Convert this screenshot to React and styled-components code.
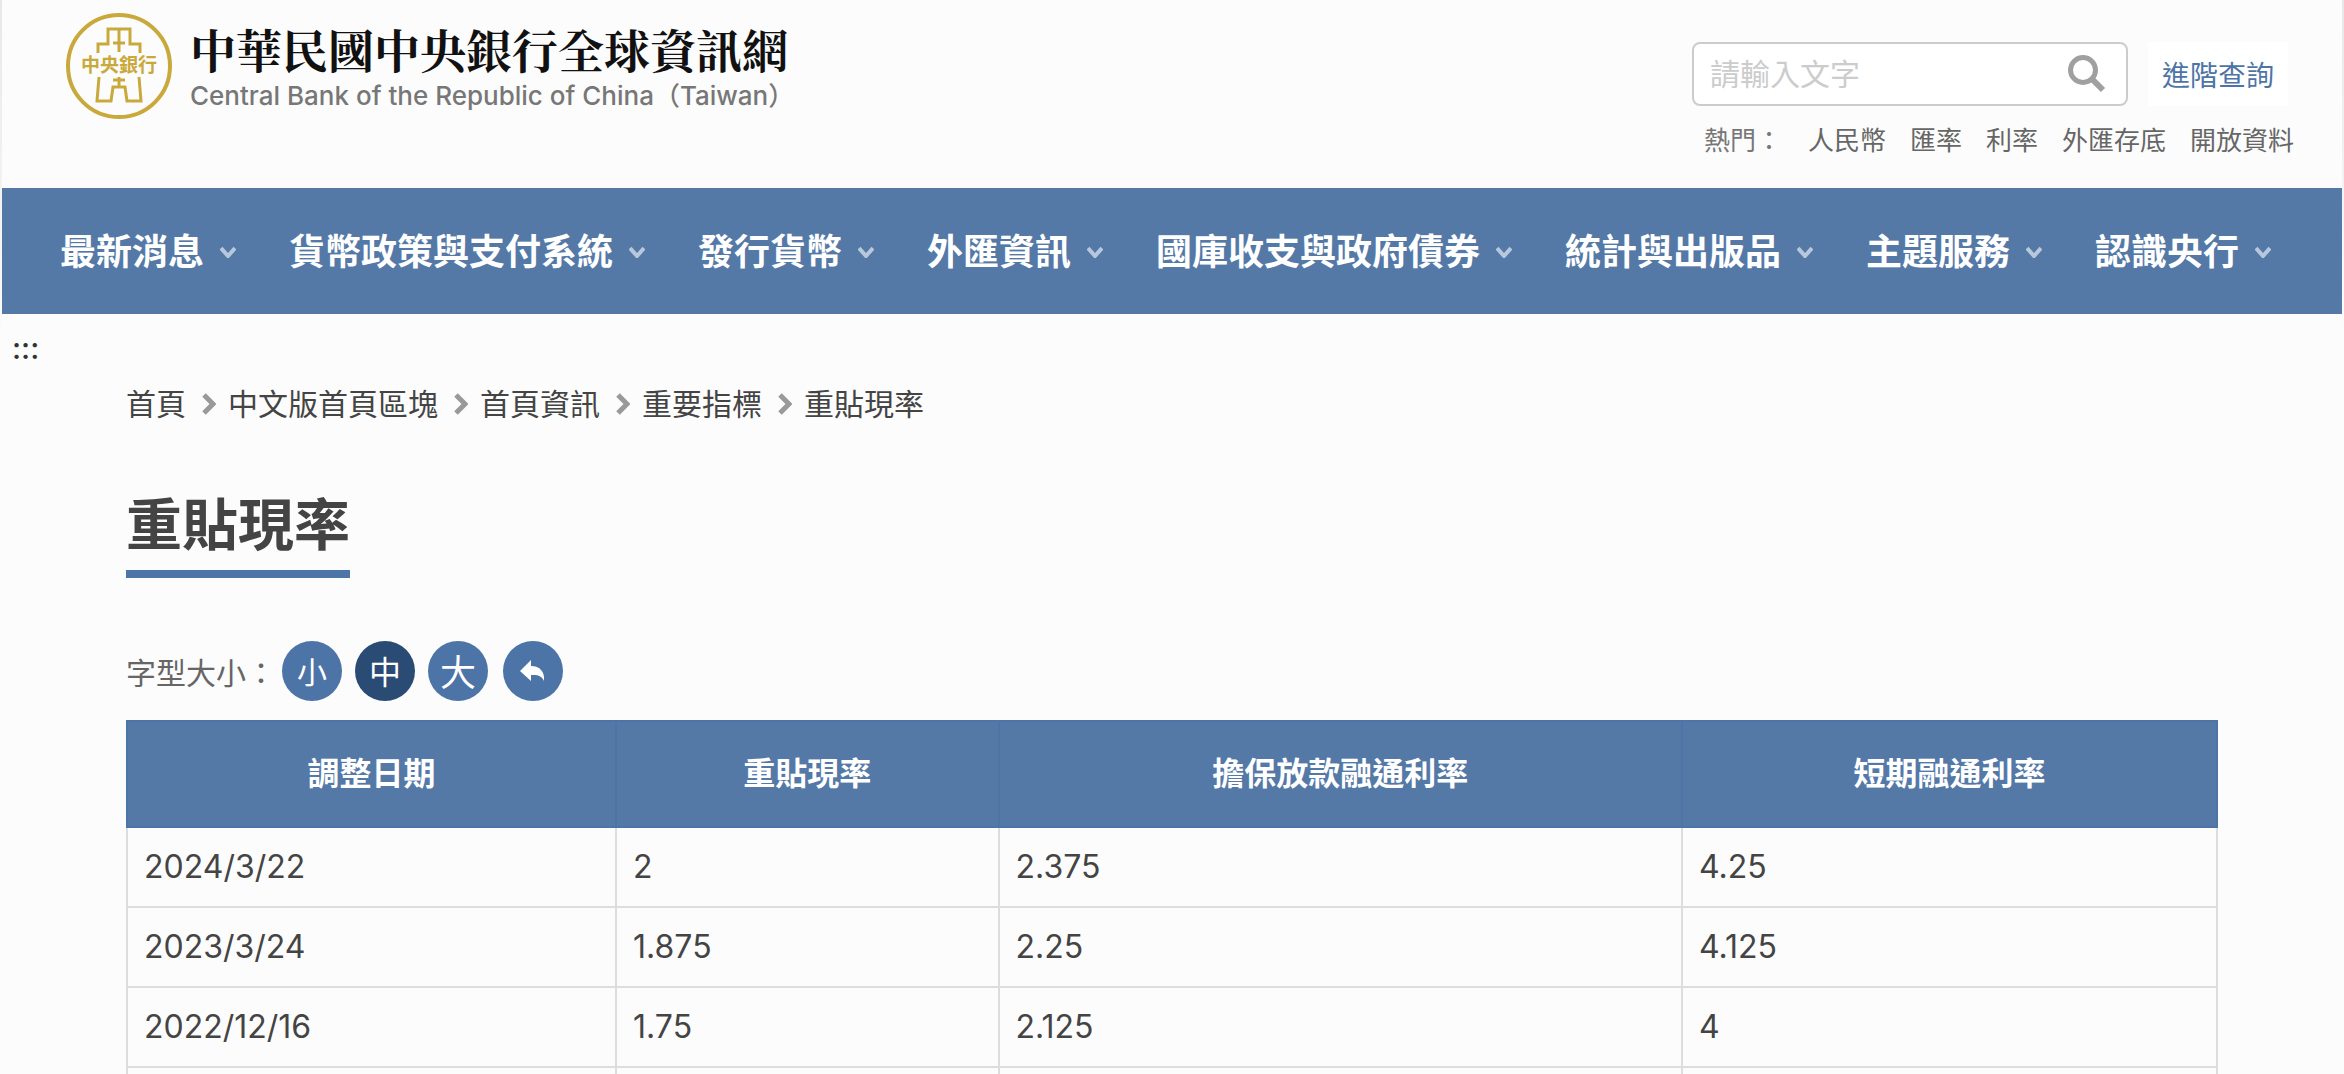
import React from 'react'
import styled, { createGlobalStyle } from 'styled-components'

const GlobalStyle = createGlobalStyle`
  *, *::before, *::after {
    box-sizing: border-box;
  }
  body {
    margin: 0;
    background: #fcfcfc linear-gradient(#e8e8e8, #f2f2f2 180px, #fcfcfc 340px) no-repeat;
    color: #444;
    font-family: Inter, "Noto Sans CJK TC", sans-serif;
  }
  a {
    color: inherit;
    text-decoration: none;
  }
`

const Page = styled.div`
  margin: 0 2px;
  background: #fcfcfc;
`

const Header = styled.header`
  display: flex;
  justify-content: space-between;
  align-items: flex-start;
  height: 188px;
  padding: 13px 48px 0 64px;
`

const Brand = styled.a`
  display: flex;
  gap: 18px;
`

const Emblem = styled.svg`
  width: 106px;
  height: 106px;
  flex: none;
`

const BrandText = styled.span`
  display: flex;
  flex-direction: column;
  padding-top: 2px;
`

const BrandName = styled.span`
  color: #111;
  font: 700 46px/66px "Noto Serif CJK TC", "Noto Sans CJK TC", serif;
`

const BrandSub = styled.span`
  color: #777;
  font: 500 26px/30px Inter, "Noto Sans CJK TC", sans-serif;
  white-space: nowrap;
`

const Tools = styled.div`
  display: flex;
  flex-direction: column;
  gap: 16px;
  padding-top: 29px;
`

const SearchForm = styled.form`
  display: flex;
  gap: 20px;
`

const SearchBox = styled.div`
  display: flex;
  align-items: center;
  width: 436px;
  height: 64px;
  padding: 0 20px 0 16px;
  background: #fff;
  border: 2px solid #ccc;
  border-radius: 8px;
`

const SearchInput = styled.input`
  flex: 1;
  min-width: 0;
  padding: 0;
  border: 0;
  outline: 0;
  background: transparent;
  color: #444;
  font: 400 30px/44px Inter, "Noto Sans CJK TC", sans-serif;
  &::placeholder {
    color: #ccc;
    opacity: 1;
  }
`

const SearchButton = styled.button`
  display: flex;
  padding: 0;
  border: 0;
  background: transparent;
  cursor: pointer;
`

const Advanced = styled.a`
  display: flex;
  align-items: center;
  padding: 0 14px;
  background: #fff;
  color: #4d74a6;
  font-size: 28px;
`

const HotWords = styled.div`
  display: flex;
  gap: 24px;
  padding-left: 12px;
  color: #666;
  font-size: 26px;
  line-height: 38px;
`

const HotLabel = styled.span`
  width: 80px;
  color: #777;
`

const Nav = styled.nav`
  display: flex;
  align-items: center;
  gap: 53px;
  height: 126px;
  padding: 2px 0 0 58px;
  background: #5479a7;
  white-space: nowrap;
`

const NavLink = styled.a`
  display: flex;
  align-items: center;
  gap: 16px;
  color: #fff;
  font-size: 36px;
  font-weight: 700;
  line-height: 52px;
`

const AccessKey = styled.a`
  display: block;
  width: 40px;
  padding: 14px 0 0 10px;
  color: #333;
  font-size: 30px;
  font-weight: 500;
  line-height: 40px;
`

const Main = styled.main`
  padding: 14px 124px 0;
`

const Crumbs = styled.nav`
  display: flex;
  align-items: center;
  font-size: 30px;
  line-height: 44px;
`

const CrumbArrow = styled.svg`
  width: 14px;
  height: 22px;
  margin: 0 12px 0 16px;
`

const Title = styled.h1`
  width: fit-content;
  margin: 58px 0 0;
  padding-bottom: 4px;
  border-bottom: 8px solid #4d74a6;
  font-size: 56px;
  font-weight: 700;
  line-height: 82px;
`

const SizeBar = styled.div`
  display: flex;
  align-items: center;
  gap: 13px;
  margin: 63px 0 19px;
`

const SizeLabel = styled.span`
  margin-right: -7px;
  color: #666;
  font-size: 30px;
`

const RoundButton = styled.button`
  display: flex;
  align-items: center;
  justify-content: center;
  width: 60px;
  height: 60px;
  padding: 0 0 2px;
  border: 0;
  border-radius: 50%;
  background: ${props => (props.$active ? '#2a4b73' : '#4d74a6')};
  color: #fff;
  font: 400 ${props => props.$size || 30}px/58px "Noto Sans CJK TC", sans-serif;
  cursor: pointer;
`

const BackButton = styled(RoundButton)`
  margin-left: 2px;
  padding: 0;
`

const Table = styled.table`
  width: 100%;
  table-layout: fixed;
  border-collapse: collapse;
`

const Th = styled.th`
  width: ${props => props.$width};
  height: 106px;
  padding: 0 0 6px;
  border: 2px solid #4d74a6;
  background: #5479a7;
  color: #fff;
  font-size: 32px;
  font-weight: 700;
`

const Td = styled.td`
  height: 80px;
  padding: 0 16px;
  border: 2px solid #ddd;
  font-size: 32px;
  line-height: 46px;
`

const menu = [
  '最新消息',
  '貨幣政策與支付系統',
  '發行貨幣',
  '外匯資訊',
  '國庫收支與政府債券',
  '統計與出版品',
  '主題服務',
  '認識央行',
]

const hotWords = ['人民幣', '匯率', '利率', '外匯存底', '開放資料']

const crumbs = ['首頁', '中文版首頁區塊', '首頁資訊', '重要指標', '重貼現率']

const columns = [
  { name: '調整日期', width: '23.4%' },
  { name: '重貼現率', width: '18.3%' },
  { name: '擔保放款融通利率', width: '32.7%' },
  { name: '短期融通利率', width: '25.6%' },
]

// the newest row comes first, the last one is still empty
const rates = [
  ['2024/3/22', '2', '2.375', '4.25'],
  ['2023/3/24', '1.875', '2.25', '4.125'],
  ['2022/12/16', '1.75', '2.125', '4'],
  ['', '', '', ''],
]

const Logo = () => (
  <Emblem viewBox="0 0 106 106" fill="none" stroke="#c9a93c">
    <circle cx="53" cy="53" r="51" strokeWidth="4" />
    <g strokeWidth="3">
      <path d="M32 40V31H42V16H64V31H74V40M53 16V39M47 30H59" />
      <path d="M33 64L31 88H45L47 74H59L61 88H75L73 64" />
      <path d="M53 64V74M47 67H59" />
    </g>
    <text
      x="53"
      y="59"
      textAnchor="middle"
      fill="#c9a93c"
      stroke="none"
      fontFamily="Noto Sans CJK TC, sans-serif"
      fontSize="19"
      fontWeight="700"
    >
      中央銀行
    </text>
  </Emblem>
)

const App = () => (
  <Page>
    <GlobalStyle />
    <Header>
      <Brand href="#">
        <Logo />
        <BrandText>
          <BrandName>中華民國中央銀行全球資訊網</BrandName>
          <BrandSub>Central Bank of the Republic of China（Taiwan）</BrandSub>
        </BrandText>
      </Brand>
      <Tools>
        <SearchForm>
          <SearchBox>
            <SearchInput type="text" placeholder="請輸入文字" aria-label="請輸入文字" />
            <SearchButton type="button" aria-label="搜尋">
              <svg width="38" height="38" viewBox="0 0 38 38" fill="none" stroke="#a0a0a0">
                <circle cx="15" cy="15" r="12.5" strokeWidth="5" />
                <path d="M23 23L35 35" strokeWidth="6" />
              </svg>
            </SearchButton>
          </SearchBox>
          <Advanced href="#">進階查詢</Advanced>
        </SearchForm>
        <HotWords>
          <HotLabel>熱門：</HotLabel>
          {hotWords.map(word => <a href="#" key={word}>{word}</a>)}
        </HotWords>
      </Tools>
    </Header>
    <Nav>
      {menu.map(item => (
        <NavLink href="#" key={item}>
          {item}
          <svg width="16" height="12" viewBox="0 0 16 12" fill="none" stroke="#b8c8dc">
            <path d="M1 2L8 10L15 2" strokeWidth="4" />
          </svg>
        </NavLink>
      ))}
    </Nav>
    <AccessKey href="#">:::</AccessKey>
    <Main>
      <Crumbs>
        {crumbs.map((crumb, i) => (
          <React.Fragment key={crumb}>
            {i > 0 && (
              <CrumbArrow viewBox="0 0 14 22" fill="none" stroke="#999">
                <path d="M2 2L11 11L2 20" strokeWidth="5" />
              </CrumbArrow>
            )}
            <a href="#">{crumb}</a>
          </React.Fragment>
        ))}
      </Crumbs>
      <Title>重貼現率</Title>
      <SizeBar>
        <SizeLabel>字型大小：</SizeLabel>
        <RoundButton>小</RoundButton>
        <RoundButton $active $size={32}>中</RoundButton>
        <RoundButton $size={36}>大</RoundButton>
        <BackButton aria-label="回上一頁">
          <svg width="26" height="22" viewBox="0 0 26 22" fill="#fff">
            <path d="M0 11L11 0V6C20 6 25 12 24 21C22 16 18 14.500 11 15V21Z" />
          </svg>
        </BackButton>
      </SizeBar>
      <Table>
        <thead>
          <tr>
            {columns.map(col => <Th key={col.name} $width={col.width}>{col.name}</Th>)}
          </tr>
        </thead>
        <tbody>
          {rates.map((row, n) => (
            <tr key={n}>
              {row.map((cell, i) => <Td key={i}>{cell}</Td>)}
            </tr>
          ))}
        </tbody>
      </Table>
    </Main>
  </Page>
)

export default App
